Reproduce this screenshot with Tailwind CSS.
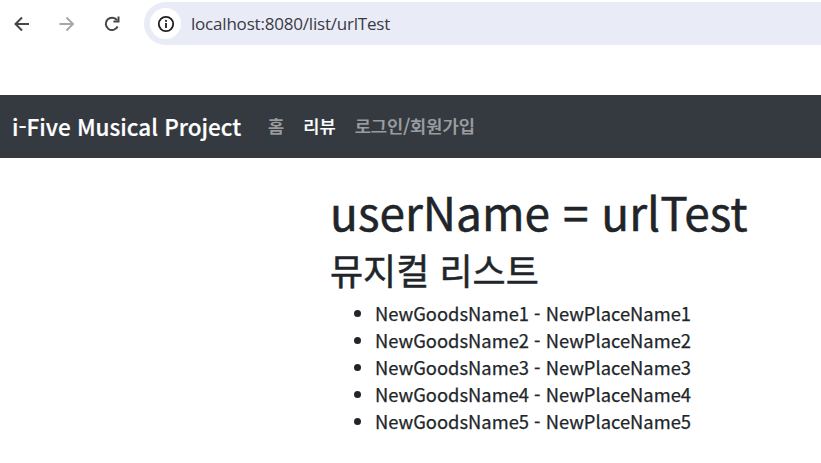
<!DOCTYPE html>
<html lang="ko">
<head>
    <meta charset="UTF-8">
    <title>i-Five Musical Project</title>
    <script src="https://cdn.jsdelivr.net/npm/@tailwindcss/browser@4"></script>
</head>
<body class="bg-white h-[463px] overflow-hidden font-['Noto_Sans_CJK_KR','Noto_Sans',sans-serif]">
    <!-- Browser toolbar -->
    <div class="h-[95px] pt-[2px]">
        <div class="flex items-center h-[43px]">
            <div class="flex items-center w-[144px] pl-[13px] gap-[27px]">
                <svg class="w-[18px] h-[18px]" viewBox="0 0 18 18" fill="none" stroke="#474747" stroke-width="2"><path d="M16 9H2.5M9 2.5L2.5 9L9 15.5"/></svg>
                <svg class="w-[18px] h-[18px]" viewBox="0 0 18 18" fill="none" stroke="#a8a8a8" stroke-width="2"><path d="M1.5 9H15M8.5 2.5L15 9L8.5 15.5"/></svg>
                <svg class="w-[18px] h-[18px]" viewBox="0 0 18 18" fill="none" stroke="#474747" stroke-width="2"><path d="M14.6 11.5A6.2 6.2 0 1 1 14 5.2"/><path d="M15.5 1.5V6.6H10.4"/></svg>
            </div>
            <div class="flex-1 h-[43px] bg-[#e9ecf7] rounded-l-full flex items-center pl-[6px]">
                <div class="w-[31px] h-[31px] rounded-full bg-white flex items-center justify-center">
                    <svg class="w-[18px] h-[18px]" viewBox="0 0 18 18" fill="none"><circle cx="9" cy="9" r="7.2" stroke="#1f1f1f" stroke-width="1.8"/><rect x="8.1" y="8" width="1.8" height="5" fill="#1f1f1f"/><rect x="8.1" y="4.9" width="1.8" height="1.9" fill="#1f1f1f"/></svg>
                </div>
                <span class="ml-[10px] text-[17px] text-[#3a3a44] font-['Open_Sans',sans-serif] tracking-[-0.2px]">localhost:8080/list/urlTest</span>
            </div>
        </div>
    </div>

    <!-- Navbar -->
    <nav class="h-[63px] bg-[#343a40] flex items-center pl-[12px]">
        <a class="text-[22.5px] font-medium text-white mr-[27px] [-webkit-text-stroke:0.2px]">i-Five Musical Project</a>
        <ul class="flex gap-[19px] text-[17.6px] font-medium text-white/50 [-webkit-text-stroke:0.2px]">
            <li>홈</li>
            <li class="text-white">리뷰</li>
            <li>로그인/회원가입</li>
        </ul>
    </nav>

    <!-- Content -->
    <main class="pl-[330px] pt-[24px] text-[#212529]">
        <h1 class="text-[46px] leading-[58px] [-webkit-text-stroke:0.5px]">userName = urlTest</h1>
        <h2 class="text-[36px] leading-[43px] mt-[8px] [-webkit-text-stroke:0.5px]">뮤지컬 리스트</h2>
        <ul class="list-disc pl-[45px] mt-[9px] text-[18.35px] leading-[27px] [-webkit-text-stroke:0.25px]">
            <li>NewGoodsName1 - NewPlaceName1</li>
            <li>NewGoodsName2 - NewPlaceName2</li>
            <li>NewGoodsName3 - NewPlaceName3</li>
            <li>NewGoodsName4 - NewPlaceName4</li>
            <li>NewGoodsName5 - NewPlaceName5</li>
        </ul>
    </main>
</body>
</html>
